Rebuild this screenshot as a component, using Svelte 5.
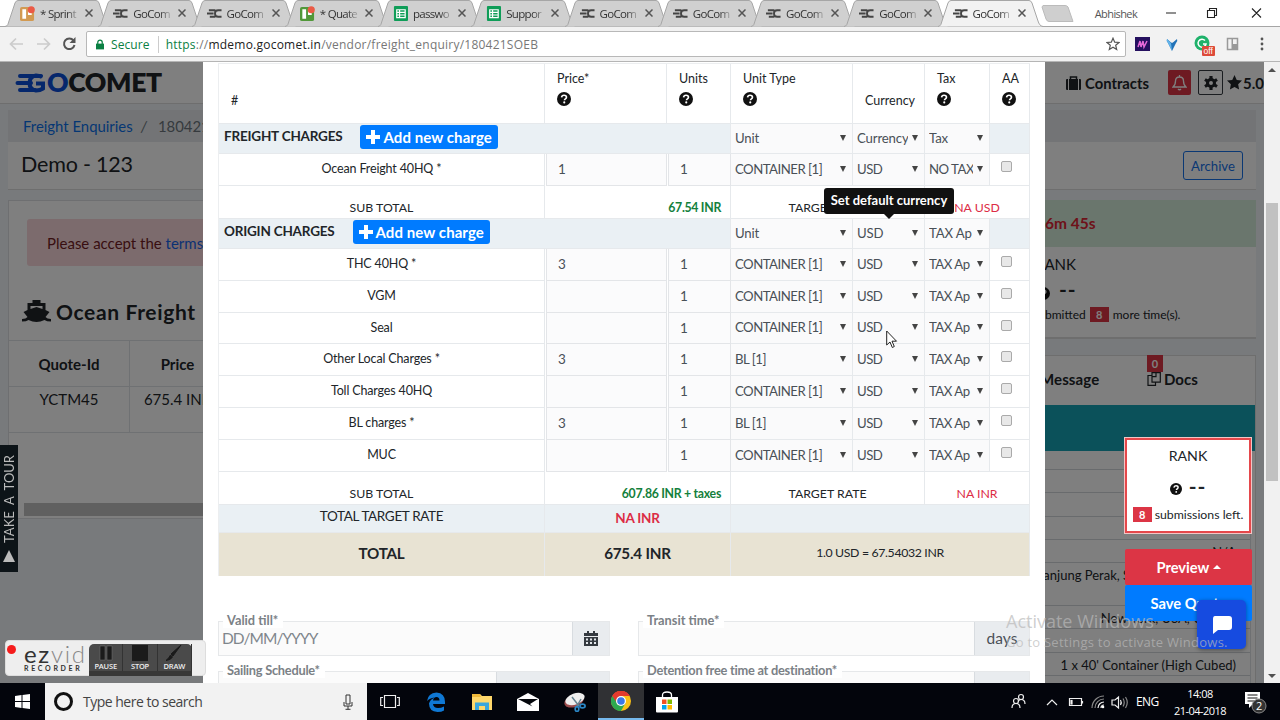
<script lang="ts">
  type Tab = { title: string; icon: 'board' | 'boardGreen' | 'comet' | 'sheet' };
  type Charge = { name: string; price: string; unit: string; tax: string };

  const tabs: Tab[] = [
    { title: '* Sprint', icon: 'board' },
    { title: 'GoCom', icon: 'comet' },
    { title: 'GoCom', icon: 'comet' },
    { title: '* Quate', icon: 'boardGreen' },
    { title: 'passwo', icon: 'sheet' },
    { title: 'Suppor', icon: 'sheet' },
    { title: 'GoCom', icon: 'comet' },
    { title: 'GoCom', icon: 'comet' },
    { title: 'GoCom', icon: 'comet' },
    { title: 'GoCom', icon: 'comet' },
    { title: 'GoCom', icon: 'comet' }
  ];

  const freight: Charge[] = [
    { name: 'Ocean Freight 40HQ *', price: '1', unit: 'CONTAINER [1]', tax: 'NO TAX' }
  ];

  const origin: Charge[] = [
    { name: 'THC 40HQ *', price: '3', unit: 'CONTAINER [1]', tax: 'TAX Ap' },
    { name: 'VGM', price: '', unit: 'CONTAINER [1]', tax: 'TAX Ap' },
    { name: 'Seal', price: '', unit: 'CONTAINER [1]', tax: 'TAX Ap' },
    { name: 'Other Local Charges *', price: '3', unit: 'BL [1]', tax: 'TAX Ap' },
    { name: 'Toll Charges 40HQ', price: '', unit: 'CONTAINER [1]', tax: 'TAX Ap' },
    { name: 'BL charges *', price: '3', unit: 'BL [1]', tax: 'TAX Ap' },
    { name: 'MUC', price: '', unit: 'CONTAINER [1]', tax: 'TAX Ap' }
  ];

  const details = ['', '', '', '', 'N/A', 'Tanjung Perak, Surabaya, Indonesia', 'New York, USA, USNYC', '', "1 x 40' Container (High Cubed)", ''];
</script>

{#snippet help()}
  <svg class="help" viewBox="0 0 16 16">
    <circle cx="8" cy="8" r="8" />
    <path d="M5.2 6.2c.2-1.700 1.300-2.500 2.800-2.500 1.600 0 2.800.9 2.800 2.300 0 1.800-2.200 1.800-2.200 3.300" fill="none" stroke="#fff" stroke-width="1.900" />
    <circle cx="8.300" cy="11.900" r="1.200" fill="#fff" />
  </svg>
{/snippet}

{#snippet select(value: string)}
  <div class="cell select"><span>{value}</span><i></i></div>
{/snippet}

{#snippet charge(item: Charge)}
  <div class="row charge">
    <div class="cell name">{item.name}</div>
    <div class="cell input">{item.price}</div>
    <div class="cell input units">1</div>
    {@render select(item.unit)}
    {@render select('USD')}
    {@render select(item.tax)}
    <div class="cell check"><b></b></div>
  </div>
{/snippet}

{#snippet group(title: string, currency: string, tax: string)}
  <div class="row group">
    <div class="cell wide">
      <strong>{title}</strong>
      <button>
        <svg width="14" height="14" viewBox="0 0 14 14"><path d="M5 0h4v5h5v4H9v5H5V9H0V5h5z" fill="#fff" /></svg>
        <span>Add new charge</span>
      </button>
    </div>
    {@render select('Unit')}
    {@render select(currency)}
    {@render select(tax)}
    <div class="cell"></div>
  </div>
{/snippet}

<div class="screen">
  <div class="tabs">
    {#each tabs as tab, i}
      <div class="tab">
        <svg class="shape" width="106" height="27" viewBox="0 0 106 27">
          <path d="M0 26.500C3 26 3 24 4 21L10 3Q11 .5 13 .5H91Q93 .5 94 3L100 21C101 24 102 26 105 26.500" fill={i === 10 ? '#f2f2f2' : '#d0d0d0'} stroke="#a6a6a6" />
        </svg>
        {#if tab.icon === 'comet'}
          <svg class="fav" viewBox="0 0 16 16"><path d="M2 4.500h7M0 8h7M3 11.500h6M15.500 4.500h-3.500Q8.500 4.500 8.500 8t3.500 3.500h3.500" fill="none" stroke="#444" stroke-width="2" /></svg>
        {:else if tab.icon === 'sheet'}
          <svg class="fav" viewBox="0 0 16 16"><rect x="1" width="15" height="16" rx="1" fill="#0f9d58" /><path d="M4 4h9v8.500H4zM4 6.800h9M4 9.600h9M7 4v8.500" fill="none" stroke="#fff" stroke-width="1.300" /></svg>
        {:else}
          <svg class="fav" viewBox="0 0 16 16"><rect y="1" width="15" height="15" rx="2" fill={tab.icon === 'board' ? '#d29a52' : '#519839'} /><path d="M2.500 3.500h4v10h-4zM8.500 3.500h4v6h-4z" fill="#fff" /><circle cx="12" cy="4" r="3.800" fill="#eb5a46" /></svg>
        {/if}
        <span class="title">{tab.title}</span>
        <svg class="close" viewBox="0 0 8 8"><path d="M.5.5l7 7M7.500.5l-7 7" stroke="#555" stroke-width="1.500" /></svg>
      </div>
    {/each}
    <svg class="newtab" width="33" height="17" viewBox="0 0 33 17"><path d="M2 .5H24Q26 .5 27 2L32 16.500H8Q6 16.500 5 14L1 2Z" fill="#cfcfcf" stroke="#bbb" /></svg>
    <span class="user">Abhishek</span>
    <svg class="window" width="98" height="14" viewBox="0 0 98 14">
      <path d="M2 7h10M43.500 4.500h7v7h-7zM45.500 4.500v-2h7v7h-2M88 2.500l9 9M97 2.500l-9 9" fill="none" stroke="#222" stroke-width="1.100" />
    </svg>
  </div>

  <div class="toolbar">
    <svg width="70" height="16" viewBox="0 0 70 16">
      <g fill="none" stroke-width="1.700">
        <path d="M14 8H1.500M7 2.500L1.500 8 7 13.500M28 8h12.500M35 2.500L40.500 8 35 13.500" stroke="#ccc" />
        <path d="M64.500 4.500A5.300 5.300 0 1 0 65.500 9" stroke="#555" stroke-width="2" />
      </g>
      <path d="M66.500 1v6h-6z" fill="#555" />
    </svg>
    <div class="address">
      <svg width="8" height="11" viewBox="0 0 9 11"><path d="M0 4.500h9V11H0z" fill="#0b8043" /><path d="M2 5V3a2.500 2.500 0 0 1 5 0v2" fill="none" stroke="#0b8043" stroke-width="1.400" /></svg>
      <span class="secure">Secure</span>
      <span class="url"><em>https</em>://<b>mdemo.gocomet.in</b>/vendor/freight_enquiry/180421SOEB</span>
      <svg class="star" width="14" height="14" viewBox="0 0 14 14"><path d="M7 1.200l1.700 4 4.300.3-3.300 2.800 1 4.200L7 10.200l-3.700 2.300 1-4.200L1 5.500l4.300-.3z" fill="none" stroke="#555" stroke-width="1.200" /></svg>
    </div>
    <svg width="138" height="26" viewBox="0 0 138 26">
      <rect x="3" y="6" width="15" height="14" fill="#25105f" />
      <path d="M6 16l2-6 1 6 2-6 1 6 3-6" fill="none" stroke="#e469d8" stroke-width="1.500" />
      <path d="M35 8l3.500 3 1.500 1 1.500-1L45 8q1 2-1 4l-4 8-4-8q-2-2-1-4z" fill="#2273b8" />
      <path d="M35 8l4 4 1 8-4-8q-2-2-1-4z" fill="#63b4ea" />
      <circle cx="70" cy="12" r="7.500" fill="#1fb26b" />
      <path d="M73 9.500a4 4 0 1 0 1 3.500h-3" fill="none" stroke="#fff" stroke-width="1.500" />
      <rect x="70" y="15" width="13" height="10" rx="1" fill="#dd4b39" />
      <text x="71.500" y="23" font-size="8.500" fill="#fff" font-family="Liberation Sans">off</text>
      <path d="M95.500 7.500h10v11h-10z" fill="none" stroke="#999" stroke-width="1.500" />
      <path d="M99.500 8h1.500v10h-1.500zM101 13h4v5h-4z" fill="#999" />
      <g fill="#555"><circle cx="130" cy="8" r="1.400" /><circle cx="130" cy="13" r="1.400" /><circle cx="130" cy="18" r="1.400" /></g>
    </svg>
  </div>

  <div class="viewport">
    <div class="page">
      <nav>
        <svg width="31" height="20" viewBox="0 0 31 20">
          <g fill="none" stroke="#0b4fd8" stroke-width="4" stroke-linecap="round"><path d="M5 3H26M2.500 10H16M5 17H20" /><path d="M27 4Q24 2.500 21 2.500 14.500 3.500 14.500 10T21 17.500q4 0 7-2V10.500H21" stroke-linecap="butt" /></g>
        </svg>
        <span class="logo"><i>O</i>COMET</span>
        <span class="contracts">
          <svg width="15" height="14" viewBox="0 0 15 14"><path d="M4.500 3V1h6v2" fill="none" stroke="#212529" stroke-width="1.500" /><path d="M0 4q0-1 1-1h1v11H1q-1 0-1-1zM3 3h9v11H3zM13 3h1q1 0 1 1v9q0 1-1 1h-1z" fill="#212529" /></svg>
          Contracts
        </span>
        <span class="bell"><svg width="15" height="17" viewBox="0 0 15 17"><path d="M1 13q2.500-2 2.500-6 0-4 4-4t4 4q0 4 2.500 6zM7.500 1v2M6 15q1.500 1.500 3 0" fill="none" stroke="#fff" stroke-width="1.300" /></svg></span>
        <span class="gear"><svg width="14" height="14" viewBox="0 0 16 16"><circle cx="8" cy="8" r="4" fill="none" stroke="#212529" stroke-width="3.500" /><path d="M8 0v3.500M8 12.500V16M1.100 4l3 1.750M11.900 10.250l3 1.750M1.100 12l3-1.750M11.900 5.750l3-1.750" stroke="#212529" stroke-width="3.600" /></svg></span>
        <span class="rating"><svg width="15" height="15" viewBox="0 0 16 16"><path d="M8 0l2.400 5.200 5.600.7-4.100 3.900 1 5.700L8 12.700l-4.900 2.800 1-5.700L0 5.900l5.600-.7z" fill="#212529" /></svg>5.0</span>
      </nav>
      <div class="crumbs"><a href="#enquiries">Freight Enquiries</a><i>/</i><span>180421SOEB</span></div>
      <div class="heading"><h1>Demo - 123</h1><button>Archive</button></div>

      <div class="columns">
        <section class="quote">
          <div class="alert">Please accept the <a href="#terms">terms</a></div>
          <h2>
            <svg width="29" height="22" viewBox="0 0 29 22"><path d="M10.500 0h8v3h5v7l4 2-4 5q1.500 2 5.500 2v2.500q-4.500 0-6.500-1.500-4 2-8 2t-8-2Q4.500 21.500 0 21.500V19q4 0 5.500-2l-4-5 4-2V3h5z" fill="#212529" /><path d="M8.500 6h12v3L14.500 7l-6 2z" fill="#fff" /></svg>
            Ocean Freight
          </h2>
          <div class="quotes">
            <div class="th">Quote-Id</div><div class="th">Price</div>
            <div>YCTM45</div><div>675.4 INR</div>
          </div>
          <div class="hscroll"></div>
        </section>

        <aside>
          <div class="timer">6m 45s</div>
          <div class="rank">
            <div>RANK</div>
            <div class="none">{@render help()}<b>--</b></div>
            <small>bmitted <mark>8</mark> more time(s).</small>
          </div>
          <div class="details">
            <div class="links">
              <span class="message">Message</span>
              <span class="docs"><mark>0</mark><svg width="14" height="14" viewBox="0 0 14 14"><path d="M5 .7h8.300v9.500H5zM5 3.500H1v9.800h7.500v-3M9 .7v4H5" fill="none" stroke="#212529" stroke-width="1.200" /></svg>Docs</span>
            </div>
            <div class="teal"></div>
            <div class="lines">
              {#each details as line}
                <div class:tall={line.startsWith('Tan')}>{line}</div>
              {/each}
            </div>
          </div>
        </aside>
      </div>
    </div>

    <div class="shade"></div>
    <div class="scrollbar"><i class="up"></i><div></div><i class="down"></i></div>

    <div class="modal">
      <div class="charges">
        <div class="row head">
          <div class="cell hash">#</div>
          <div class="cell">Price*{@render help()}</div>
          <div class="cell">Units{@render help()}</div>
          <div class="cell">Unit Type{@render help()}</div>
          <div class="cell currency">Currency</div>
          <div class="cell">Tax{@render help()}</div>
          <div class="cell">AA{@render help()}</div>
        </div>
        {@render group('FREIGHT CHARGES', 'Currency', 'Tax')}
        {#each freight as item}{@render charge(item)}{/each}
        <div class="row subtotal">
          <div class="cell">SUB TOTAL</div>
          <div class="cell amount">67.54 INR</div>
          <div class="cell">TARGET RATE</div>
          <div class="cell none">NA USD</div>
        </div>
        {@render group('ORIGIN CHARGES', 'USD', 'TAX Ap')}
        {#each origin as item}{@render charge(item)}{/each}
        <div class="row subtotal">
          <div class="cell">SUB TOTAL</div>
          <div class="cell amount">607.86 INR + taxes</div>
          <div class="cell">TARGET RATE</div>
          <div class="cell none">NA INR</div>
        </div>
        <div class="row target">
          <div class="cell">TOTAL TARGET RATE</div>
          <div class="cell none">NA INR</div>
          <div class="cell"></div>
        </div>
        <div class="row total">
          <div class="cell">TOTAL</div>
          <div class="cell">675.4 INR</div>
          <div class="cell rate">1.0 USD = 67.54032 INR</div>
        </div>
      </div>

      <div class="fields">
        <div class="field">
          <label for="valid">Valid till*</label>
          <div class="box"><span id="valid">DD/MM/YYYY</span>
            <div class="addon"><svg width="14" height="15" viewBox="0 0 14 15"><path d="M0 2h14v3H0zM3 0h2v3H3zM9 0h2v3H9zM0 6h14v9H0z" fill="#343a40" /><path d="M2 7.500h2v2H2zM6 7.500h2v2H6zM10 7.500h2v2h-2zM2 11h2v2H2zM6 11h2v2H6zM10 11h2v2h-2z" fill="#e4e8ec" /></svg></div>
          </div>
        </div>
        <div class="field">
          <label for="transit">Transit time*</label>
          <div class="box"><span id="transit"></span><div class="addon days">days</div></div>
        </div>
        <div class="field">
          <label for="sailing">Sailing Schedule*</label>
          <div class="box"><span id="sailing"></span><div class="addon schedule"></div></div>
        </div>
        <div class="field">
          <label for="detention">Detention free time at destination*</label>
          <div class="box"><span id="detention"></span><div class="addon days"></div></div>
        </div>
      </div>
    </div>

    <div class="tooltip">Set default currency</div>
    <svg class="cursor" width="12" height="19" viewBox="0 0 12 19"><path d="M.7 1v14l3.300-3 2.300 5.500 2-1-2.300-5.300h4.500z" fill="#fff" stroke="#222" /></svg>

    <div class="tour"><span>TAKE&nbsp; A&nbsp; TOUR</span></div>

    <div class="floating">
      <div class="rankbox">
        <div>RANK</div>
        <div class="none">{@render help()}<b>--</b></div>
        <small><mark>8</mark> submissions left.</small>
      </div>
      <button class="preview">Preview <i></i></button>
      <button class="save">Save Quote</button>
    </div>
    <div class="chat"><svg width="20" height="18" viewBox="0 0 20 18"><path d="M3 0h14q3 0 3 3v8q0 3-3 3H6l-5 4V3Q1 0 3 0z" fill="#fff" /></svg></div>

    <div class="recorder">
      <i class="dot"></i>
      <div class="brand"><span>ez<em>vid</em></span><small>RECORDER</small></div>
      <div class="controls">
        <div><svg width="16" height="16" viewBox="0 0 16 16"><path d="M2 1h5v14H2zM9 1h5v14H9z" fill="#1b1b1b" stroke="#777" stroke-width=".5" /></svg>PAUSE</div>
        <div><svg width="16" height="16" viewBox="0 0 16 16"><path d="M0 0h16v16H0z" fill="#1b1b1b" /></svg>STOP</div>
        <div><svg width="16" height="16" viewBox="0 0 16 16"><path d="M15 0L5 9l2 2zM4.500 10l2 2Q5 15 0 15.500 3 13 4.500 10z" fill="#1b1b1b" stroke="#1b1b1b" /></svg>DRAW</div>
      </div>
    </div>

    <div class="watermark"><strong>Activate Windows</strong><span>Go to Settings to activate Windows.</span></div>
  </div>

  <footer>
    <div class="start"><svg width="15" height="15" viewBox="0 0 15 15"><path d="M0 2l6.500-1v6H0zM7.500.9L15 0v7H7.500zM0 8h6.500v6L0 13zM7.500 8H15v7l-7.500-1z" fill="#fff" /></svg></div>
    <div class="search">
      <i></i><span>Type here to search</span>
      <svg width="10" height="16" viewBox="0 0 10 16"><path d="M3 1h4v9H3zM1 8v4h8V8M5 12v3.500M2.500 15.300h5" fill="none" stroke="#333" /></svg>
    </div>
    <div class="apps">
      <div><svg width="20" height="16" viewBox="0 0 20 16"><path d="M4.500 1.500h11v12h-11zM3 3.500H.7v8H3M17 3.500h2.300v8H17" fill="none" stroke="#eee" stroke-width="1.200" /></svg></div>
      <div><svg width="20" height="20" viewBox="0 0 20 20"><path d="M1 9Q2 1 10.500.5 19 1 19 10v2H7q.5 4 5 4 3 0 6-1.500v4Q15.500 20 11.500 20 3 19.500 3 11.500 4 7.500 8.500 5.500 3.500 6 1 9zM7 8.500h6.500Q13.500 5 10.500 5T7 8.500z" fill="#0f78d4" fill-rule="evenodd" /></svg></div>
      <div><svg width="20" height="17" viewBox="0 0 20 17"><path d="M0 1h8l2 2h10v14H0z" fill="#ffd86b" /><path d="M0 1h8l1 3H0z" fill="#f0b93a" /><path d="M3 17V9.500h14V17h-4v-4H7v4z" fill="#3aa7dd" /></svg></div>
      <div><svg width="22" height="18" viewBox="0 0 22 18"><path d="M0 6l11-6 11 6v12H0z" fill="#fff" /><path d="M1 6h20l-8 5 2.500 2.500L1 6z" fill="#05070d" /></svg></div>
      <div><svg width="22" height="20" viewBox="0 0 22 20"><ellipse cx="10" cy="9" rx="10" ry="6" fill="#9c4b4b" transform="rotate(-20 10 9)" /><ellipse cx="11" cy="7" rx="10" ry="5.500" fill="#eee" transform="rotate(-20 11 7)" /><path d="M8 5l7 9M17 7l-4 7" stroke="#66828f" stroke-width="1.500" /><g fill="none" stroke="#2b86c5" stroke-width="1.700"><ellipse cx="13" cy="17" rx="1.800" ry="2.400" /><ellipse cx="18.500" cy="14" rx="2.600" ry="1.900" /></g></svg></div>
      <div class="open"><svg width="20" height="20" viewBox="0 0 20 20"><circle cx="10" cy="10" r="10" fill="#fbc116" /><path d="M10 10L1.300 5A10 10 0 0 1 18.700 5z" fill="#e33b2e" /><path d="M10 10L1.300 5A10 10 0 0 0 10 20l4.500-8z" fill="#2da94f" /><path d="M10 5h8.700L14 12z" fill="#fbc116" /><path d="M10 5h8.700A10 10 0 0 0 1.300 5L6 12z" fill="#e33b2e" /><circle cx="10" cy="10" r="5" fill="#fff" /><circle cx="10" cy="10" r="3.800" fill="#3b78e7" /></svg></div>
      <div><svg width="22" height="22" viewBox="0 0 22 22"><path d="M6.500 6V4q0-3 4.500-3t4.500 3v2" fill="none" stroke="#fff" stroke-width="1.300" /><path d="M0 6h22v14.500q0 1-1 1H1q-1 0-1-1z" fill="#fff" /><path d="M6 8.500h4.500V13H6z" fill="#f25022" /><path d="M11.500 8.500H16V13h-4.500z" fill="#7fba00" /><path d="M6 14h4.500v4.500H6z" fill="#00a4ef" /><path d="M11.500 14H16v4.500h-4.500z" fill="#ffb900" /></svg></div>
    </div>
    <svg class="tray" width="118" height="20" viewBox="0 0 118 20">
      <g fill="none" stroke="#eee" stroke-width="1.200">
        <circle cx="5" cy="9" r="2.500" /><path d="M1 16q0-4.500 4-4.500t4 4.500" /><circle cx="10" cy="5" r="2.500" /><path d="M7 9.500q1.200-2 3-2 4 0 4 4.500" />
        <path d="M36 13l5-5 5 5" /><path d="M58.500 6.500h12v7h-12zM71.500 9v2.500" /><path d="M60 8.500h1v3.500h-1z" fill="#eee" />
        <path d="M90 16a3 3 0 0 1 3-3M87 16a6 6 0 0 1 6-6" /><path d="M84 16a9 9 0 0 1 9-9M81 16A12 12 0 0 1 93 4" stroke="#888" />
        <path d="M101 8h3l3.500-3v11L104 13h-3zM109.500 8q1.500 2.500 0 5" /><path d="M112 6.500q2.500 4 0 8M114.500 5q3.500 5.500 0 11" stroke="#888" />
      </g>
      <circle cx="92" cy="15" r="1.300" fill="#fff" />
    </svg>
    <span class="lang">ENG</span>
    <div class="clock"><span>14:08</span><span>21-04-2018</span></div>
    <svg class="notes" width="24" height="24" viewBox="0 0 24 24"><path d="M1 2h15v12H9l-4 4v-4H1z" fill="#fff" /><path d="M3.500 5h10M3.500 8h10M3.500 11h7" stroke="#111" /><circle cx="15" cy="16" r="7" fill="#333" stroke="#888" /><text x="12" y="20" font-size="11" fill="#fff" font-family="Open Sans">2</text></svg>
  </footer>
</div>

<style>
  :global(body) {
    margin: 0;
    overflow: hidden;
  }

  .screen {
    width: 1280px;
    height: 720px;
    overflow: hidden;
    display: flex;
    flex-direction: column;
    font-family: Lato, sans-serif;
    color: #212529;
    background: #fff;
  }

  .screen * {
    box-sizing: border-box;
  }

  svg {
    flex: none;
    display: block;
  }

  button {
    font: inherit;
    border: 0;
    padding: 0;
  }

  .tabs {
    height: 27px;
    display: flex;
    align-items: center;
    padding-left: 5px;
    border-bottom: 1px solid #a6a6a6;
    font-family: 'Open Sans', sans-serif;
  }

  .tab {
    position: relative;
    width: 93.250px;
    height: 27px;
    flex: none;
    display: flex;
    align-items: center;
    padding-left: 15px;
  }

  .shape {
    position: absolute;
    left: 0;
    top: 0;
  }

  .fav {
    position: relative;
    width: 15px;
    height: 15px;
  }

  .title {
    position: relative;
    width: 38px;
    margin-left: 5px;
    overflow: hidden;
    white-space: nowrap;
    font-size: 11.500px;
    letter-spacing: -0.7px;
    color: #333;
    mask-image: linear-gradient(90deg, #000 70%, rgba(0, 0, 0, 0.2));
  }

  .close {
    position: relative;
    width: 8px;
    height: 8px;
    margin-left: 7px;
  }

  .newtab {
    margin-left: 10px;
  }

  .user {
    margin-left: 21px;
    font-size: 11px;
    letter-spacing: -0.6px;
    color: #555;
    width: 45px;
  }

  .window {
    margin-left: 24px;
  }

  .toolbar {
    height: 35px;
    display: flex;
    align-items: center;
    padding-left: 9px;
    background: #f2f2f2;
    border-bottom: 1px solid #b5b5b5;
  }

  .address {
    width: 1040px;
    height: 26px;
    margin-left: 7px;
    margin-right: 6px;
    display: flex;
    align-items: center;
    padding-left: 9px;
    background: #fff;
    border: 1px solid #b8b8b8;
    border-radius: 2px;
    font: 12px 'Open Sans', sans-serif;
    color: #777;
  }

  .secure {
    margin: 0 7px 0 7px;
    padding-right: 8px;
    border-right: 1px solid #ccc;
    color: #0b8043;
    letter-spacing: 0.1px;
  }

  .url {
    letter-spacing: 0.23px;
  }

  .url em {
    font-style: normal;
    color: #0b8043;
  }

  .url b {
    font-weight: 400;
    color: #222;
  }

  .star {
    margin: 0 5px 0 auto;
  }

  .viewport {
    position: relative;
    height: 621px;
    overflow: hidden;
  }

  .page {
    height: 621px;
    width: 1264px;
    overflow: hidden;
    background: #f0f4f8;
  }

  nav {
    height: 42px;
    display: flex;
    align-items: center;
    padding-left: 15px;
    background: #fff;
    border-bottom: 1px solid #ddd;
    white-space: nowrap;
    font-weight: 700;
  }

  .logo {
    font: 800 26.500px/1 Lato, sans-serif;
    letter-spacing: -0.350px;
    width: 1000px;
    padding-left: 1px;
    color: #212529;
  }

  .logo i {
    font-style: normal;
    color: #0b4fd8;
  }

  .contracts {
    display: flex;
    gap: 4px;
    align-items: center;
    width: 102px;
    margin-left: 20px;
    font-size: 14.800px;
  }

  .bell {
    width: 23px;
    height: 25px;
    display: grid;
    place-items: center;
    background: #dc3545;
    border-radius: 2px;
  }

  .gear {
    width: 25px;
    height: 25px;
    margin: 0 4px 0 7px;
    display: grid;
    place-items: center;
    border: 1px solid #343a40;
    border-radius: 2px;
  }

  .rating {
    display: flex;
    align-items: center;
    gap: 1px;
    font-size: 15px;
  }

  .crumbs {
    height: 32px;
    margin: 6px 8px 0;
    padding: 0 15px;
    display: flex;
    align-items: center;
    background: #e6e9ec;
    font-size: 14.900px;
    color: #6c757d;
  }

  .crumbs a {
    color: #0b6fe8;
    text-decoration: none;
  }

  .crumbs i {
    margin: 0 11px 0 8px;
  }

  .heading {
    height: 48px;
    margin: 0 8px;
    padding: 0 13px;
    display: flex;
    align-items: center;
    justify-content: space-between;
    background: #fff;
    border-bottom: 1px solid #ddd;
  }

  h1 {
    margin: 0 0 4px;
    font-weight: 400;
    font-size: 21.500px;
    letter-spacing: -0.200px;
  }

  .heading button {
    width: 60px;
    height: 29px;
    border: 1px solid #1470e8;
    border-radius: 3px;
    background: none;
    color: #1470e8;
    font-size: 13.200px;
  }

  .columns {
    display: flex;
    justify-content: space-between;
    align-items: flex-start;
    padding: 10px 8px 0;
  }

  .quote {
    width: 900px;
    height: 319px;
    padding-top: 18px;
    background: #fff;
    border: 1px solid #dcdfe2;
  }

  .alert {
    height: 47px;
    margin-left: 18px;
    padding-left: 20px;
    line-height: 48px;
    background: #f8d7da;
    border-radius: 3px;
    font-size: 15px;
    color: #721c24;
  }

  .alert a {
    color: #1763e8;
    text-decoration: none;
  }

  h2 {
    display: flex;
    align-items: center;
    gap: 5px;
    height: 24px;
    margin: 33px 0 17px 13px;
    font-size: 21px;
    letter-spacing: 0.650px;
  }

  .quotes {
    display: grid;
    grid-template-columns: 121px 96px;
    font-size: 15px;
    text-align: center;
  }

  .quotes div {
    height: 46px;
    padding-top: 3px;
    border-right: 1px solid #dee2e6;
    border-bottom: 1px solid #dee2e6;
    line-height: 18px;
  }

  .quotes .th {
    height: 47px;
    padding-top: 14px;
    border-top: 1px solid #dee2e6;
    font-weight: 700;
  }

  .hscroll {
    height: 13px;
    margin: 70px 0 0 15px;
    background: #c1c1c1;
  }

  aside {
    width: 222px;
  }

  .timer {
    height: 47px;
    padding-left: 11px;
    background: #d4edda;
    color: #dc2535;
    font: 700 15.500px/46px Lato, sans-serif;
  }

  .rank {
    height: 92px;
    padding: 9px 0 0 11px;
    background: #fff;
    border-bottom: 2px solid #ddd;
    font-size: 14px;
  }

  .rank > div:first-child {
    margin-left: -10px;
    line-height: 16px;
    font-size: 15px;
  }

  .none {
    display: flex;
    align-items: center;
    gap: 7px;
  }

  .rank .none {
    margin: 6px 0 0 -8px;
    height: 20px;
    gap: 9px;
    font-size: 21px;
    letter-spacing: 1px;
  }

  .rank .none .help {
    margin-top: 10px;
    width: 13px;
    height: 13px;
  }

  .rank small {
    display: flex;
    align-items: center;
    gap: 4px;
    margin-top: 9px;
    height: 15px;
    font-size: 12px;
  }

  mark {
    width: 19px;
    height: 15px;
    background: #dc3545;
    color: #fff;
    font: 700 11px/15px Lato, sans-serif;
    text-align: center;
  }

  .details {
    margin-top: 16px;
    height: 340px;
    background: #fff;
    border: 1px solid #ddd;
  }

  .links {
    display: flex;
    height: 49px;
    align-items: center;
    padding-bottom: 3px;
    font-size: 15px;
    font-weight: 700;
  }

  .message {
    width: 112px;
    padding-left: 5px;
    letter-spacing: 0.1px;
  }

  .docs {
    position: relative;
    display: flex;
    align-items: center;
    gap: 3px;
  }

  .docs mark {
    position: absolute;
    top: -15px;
    left: 0;
    width: 16px;
    height: 17px;
    line-height: 17px;
  }

  .teal {
    height: 46px;
    background: #17a2b4;
  }

  .lines {
    width: 216px;
    border-right: 1px solid #dee2e6;
    font-size: 13px;
    text-align: right;
  }

  .lines div {
    height: 23.300px;
    padding-right: 14px;
    border-bottom: 1px solid #d3d7db;
    line-height: 24px;
    overflow: hidden;
    white-space: nowrap;
  }

  .lines div.tall {
    height: 43px;
    line-height: 25px;
  }

  .lines div:first-child {
    height: 19px;
  }

  .shade {
    position: absolute;
    inset: 0 16px 0 0;
    background: rgba(0, 0, 0, 0.5);
  }

  .scrollbar {
    position: absolute;
    inset: 0 0 0 auto;
    width: 16px;
    display: flex;
    flex-direction: column;
    align-items: center;
    padding: 6px 0 5px;
    background: #f1f1f1;
  }

  .scrollbar div {
    width: 12px;
    height: 278px;
    margin: 131px 0 auto;
    background: #c1c1c1;
  }

  .up,
  .down {
    border: 4px solid transparent;
    border-top: 0;
    border-bottom-color: #505050;
  }

  .down {
    transform: rotate(180deg);
  }

  .modal {
    position: absolute;
    left: 203px;
    top: 0;
    width: 842px;
    height: 621px;
    padding: 1px 15px 0;
    overflow: hidden;
    background: #fff;
  }

  .row {
    display: grid;
    grid-template-columns: 326px 122px 64px 122px 72px 65px 40px;
  }

  .cell {
    border-right: 1px solid #e6e9ec;
    border-bottom: 1px solid #e6e9ec;
    font-size: 12.500px;
    white-space: nowrap;
    min-width: 0;
  }

  .charges {
    border-left: 1px solid #eceef0;
    border-top: 1px solid #eceef0;
    width: 812px;
  }

  .head {
    height: 60px;
  }

  .head .cell {
    padding: 6px 0 0 12px;
    line-height: 17px;
  }

  .head .cell.hash,
  .head .cell.currency {
    padding-top: 28px;
  }

  .help {
    width: 14px;
    height: 14px;
    margin-top: 5px;
    fill: #111;
  }

  .group {
    height: 30px;
    grid-template-columns: 512px 122px 72px 65px 40px;
    background: #eaf0f4;
  }

  .wide {
    display: flex;
    align-items: flex-start;
    gap: 18px;
    padding: 1px 0 0 5px;
  }

  .wide strong {
    font-size: 13.500px;
    letter-spacing: -0.200px;
    line-height: 23px;
  }

  .wide button {
    display: flex;
    align-items: center;
    gap: 3px;
    height: 24px;
    padding: 0 6px;
    border-radius: 3px;
    background: #007bff;
    color: #fff;
    font-size: 15px;
    letter-spacing: 0.080px;
    font-weight: 700;
  }

  .charge {
    height: 31.850px;
  }

  .name {
    text-align: center;
    line-height: 29px;
    letter-spacing: -0.150px;
  }

  .input {
    margin: 0 0 0 1px;
    padding-left: 11px;
    line-height: 30px;
    background: #fbfbfc;
    border: 1px solid #e3e5e8;
    border-top: 0;
    color: #495057;
    font-size: 13.500px;
  }

  .select {
    display: flex;
    align-items: center;
    justify-content: space-between;
    padding: 0 6px 1px 4px;
    overflow: hidden;
    background: #fafafb;
    color: #495057;
    font-size: 13.200px;
    letter-spacing: -0.500px;
  }

  .group .select {
    letter-spacing: -0.150px;
  }

  .select span {
    overflow: hidden;
    flex: 1;
    margin-right: 4px;
  }

  .select i {
    border: 3px solid transparent;
    border-top: 6px solid #444;
    border-bottom: 0;
  }

  .check {
    padding: 7px 0 0 11px;
  }

  .check b {
    display: block;
    width: 11px;
    height: 11px;
    border: 1px solid #aaa;
    border-radius: 2px;
    background: #e8e8e8;
  }

  .subtotal {
    height: 33px;
    grid-template-columns: 326px 186px 194px 105px;
    text-align: center;
  }

  .subtotal .cell {
    line-height: 18px;
    padding-top: 13px;
    font-size: 12.300px;
  }

  .subtotal .amount {
    text-align: right;
    padding-right: 9px;
    color: #14803c;
    font-weight: 700;
    letter-spacing: -0.300px;
  }

  .subtotal .none {
    display: block;
    color: #dc2c45;
  }

  .target,
  .total {
    grid-template-columns: 326px 186px 299px;
    text-align: center;
  }

  .target {
    height: 28.500px;
    background: #eaf0f4;
  }

  .target .cell {
    line-height: 22px;
    font-size: 13.500px;
    letter-spacing: -0.350px;
  }

  .target .none {
    display: block;
    color: #dc2c45;
    font-weight: 700;
    line-height: 26px;
    letter-spacing: -0.200px;
  }

  .total {
    height: 42.500px;
    background: #e8e3d3;
  }

  .total .cell {
    line-height: 40px;
    font-size: 15.200px;
    letter-spacing: -0.200px;
    font-weight: 700;
    border-bottom: 0;
  }

  .total .cell.rate {
    font-size: 12.300px;
    letter-spacing: -0.350px;
    font-weight: 400;
  }

  .fields {
    display: grid;
    grid-template-columns: 392px 392px;
    gap: 7px 28px;
    margin-top: 37px;
  }

  .field {
    position: relative;
    padding-top: 8px;
  }

  label {
    position: absolute;
    left: 5px;
    top: -1px;
    padding: 0 5px 0 4px;
    background: #fff;
    font-size: 12.800px;
    line-height: 16px;
    font-weight: 700;
    color: #7b8186;
  }

  .field:nth-child(n + 3) label {
    letter-spacing: -0.250px;
  }

  .box {
    display: flex;
    height: 35px;
    border: 1px solid #e6e8ea;
    background: #fbfbfb;
    font-size: 15px;
    line-height: 33px;
    color: #7f868c;
  }

  .box span {
    flex: 1;
    padding-left: 3px;
    letter-spacing: -0.950px;
  }

  #valid {
    font-size: 15.500px;
  }

  .addon {
    width: 37px;
    display: grid;
    place-items: center;
    background: #e9ecef;
    border-left: 1px solid #d8dce0;
    color: #495057;
  }

  .days {
    width: 55px;
    font-size: 15.500px;
  }

  .schedule {
    width: 113px;
  }

  .tooltip {
    position: absolute;
    left: 824px;
    top: 126px;
    width: 130px;
    height: 26px;
    border-radius: 3px;
    background: #111;
    color: #fff;
    font-size: 13px;
    font-weight: 700;
    line-height: 25px;
    text-align: center;
    white-space: nowrap;
  }

  .tooltip::after {
    content: '';
    position: absolute;
    left: 60px;
    top: 26px;
    border: 5px solid transparent;
    border-top-color: #111;
    border-bottom: 0;
  }

  .cursor {
    position: absolute;
    left: 886px;
    top: 268px;
  }

  .tour {
    position: absolute;
    left: 0;
    top: 383px;
    width: 18px;
    height: 127px;
    display: flex;
    flex-direction: column;
    align-items: center;
    justify-content: flex-end;
    padding-bottom: 10px;
    background: #0d1418;
    color: #bbb;
    font-size: 13px;
  }

  .tour span {
    writing-mode: vertical-rl;
    transform: rotate(180deg);
    white-space: nowrap;
    line-height: 16px;
  }

  .tour::after {
    content: '';
    margin-top: 7px;
    border: 6px solid transparent;
    border-bottom: 12px solid #bbb;
    border-top: 0;
  }

  .floating {
    position: absolute;
    left: 1124px;
    top: 375px;
    width: 128px;
    display: flex;
    flex-direction: column;
  }

  .rankbox {
    height: 97px;
    margin-bottom: 15px;
    padding-top: 7px;
    border: 3px solid #e5484b;
    outline: 1px solid #f3c5c5;
    outline-offset: -1px;
    background: #fff;
    display: flex;
    flex-direction: column;
    align-items: center;
    font-size: 14.200px;
    line-height: 18px;
  }

  .rankbox .none {
    margin-top: 12px;
    font-size: 21px;
    letter-spacing: 1px;
  }

  .rankbox .help {
    width: 12px;
    height: 12px;
  }

  .rankbox small {
    display: flex;
    align-items: center;
    gap: 3px;
    margin-top: 12px;
    font-size: 12.300px;
    line-height: 15px;
    white-space: nowrap;
  }

  .preview,
  .save {
    height: 36px;
    margin-left: 1px;
    padding-bottom: 1px;
    border-radius: 2px;
    background: #dc3545;
    color: #fff;
    font-size: 14.700px;
    font-weight: 700;
  }

  .preview i {
    display: inline-block;
    margin-bottom: 4px;
    border: 4px solid transparent;
    border-bottom-color: #fff;
    border-top: 0;
  }

  .save {
    background: #007bff;
  }

  .chat {
    position: absolute;
    left: 1197px;
    top: 538px;
    width: 49px;
    height: 49px;
    display: grid;
    place-items: center;
    border-radius: 5px;
    background: #164be0;
    box-shadow: 0 1px 4px rgba(0, 0, 0, 0.4);
  }

  .recorder {
    position: absolute;
    left: 5px;
    top: 578px;
    width: 201px;
    height: 36px;
    display: flex;
    border: 1px solid #ddd;
    border-radius: 4px;
    background: #eee;
  }

  .dot {
    width: 9px;
    height: 9px;
    margin: 4px 8px 0 1px;
    border-radius: 50%;
    background: #f51c1c;
  }

  .brand {
    width: 60px;
    display: flex;
    flex-direction: column;
    color: #333;
    white-space: nowrap;
  }

  .brand span {
    font-size: 24px;
    line-height: 25px;
    letter-spacing: 1.700px;
  }

  .brand em {
    font-style: normal;
    font-weight: 300;
    color: #888;
  }

  .brand small {
    margin-top: -2px;
    font-size: 7px;
    line-height: 8px;
    font-weight: 700;
    letter-spacing: 2.700px;
  }

  .controls {
    display: flex;
    width: 103px;
    height: 32px;
    margin: 3px 0 0 5px;
    background: #4a4a4a;
    border-bottom: 5px solid #383838;
    border-radius: 5px 5px 0 0;
  }

  .controls div {
    flex: 1;
    display: flex;
    flex-direction: column;
    align-items: center;
    padding-top: 1px;
    border-right: 1px solid #333;
    color: #eee;
    font: 600 7.500px/10px 'Open Sans', sans-serif;
    letter-spacing: -0.200px;
  }

  .watermark {
    position: absolute;
    left: 1006px;
    top: 547px;
    display: flex;
    flex-direction: column;
    font-family: 'Open Sans', sans-serif;
    color: rgba(185, 185, 185, 0.7);
    white-space: nowrap;
  }

  .watermark strong {
    font-weight: 400;
    font-size: 18px;
    line-height: 24px;
  }

  .watermark span {
    font-size: 13px;
    letter-spacing: 0.250px;
    line-height: 18px;
  }

  footer {
    height: 37px;
    display: flex;
    align-items: center;
    background: #03050c;
    color: #fff;
    font-family: 'Open Sans', sans-serif;
  }

  .start {
    width: 45px;
    display: grid;
    place-items: center;
  }

  .search {
    width: 322px;
    height: 37px;
    display: flex;
    align-items: center;
    padding: 0 14px 0 9px;
    background: #f2f2f2;
    color: #444;
    font-size: 14px;
  }

  .search i {
    width: 19px;
    height: 19px;
    margin-right: 10px;
    border: 3px solid #111;
    border-radius: 50%;
  }

  .search span {
    flex: 1;
    letter-spacing: -0.500px;
  }

  .apps {
    display: flex;
    height: 37px;
    width: 323px;
  }

  .apps div {
    width: 46.200px;
    display: grid;
    place-items: center;
  }

  .apps .open {
    background: #303134;
    border-bottom: 2px solid #76b9ed;
  }

  .tray {
    margin-left: 321px;
  }

  .lang {
    margin-left: 7px;
    font-size: 12px;
    width: 24px;
    letter-spacing: -0.600px;
  }

  .clock {
    margin-left: 10px;
    width: 60px;
    display: flex;
    flex-direction: column;
    align-items: center;
    font-size: 11px;
    line-height: 17px;
    letter-spacing: -0.550px;
    white-space: nowrap;
  }

  .notes {
    margin-left: 14px;
  }
</style>
